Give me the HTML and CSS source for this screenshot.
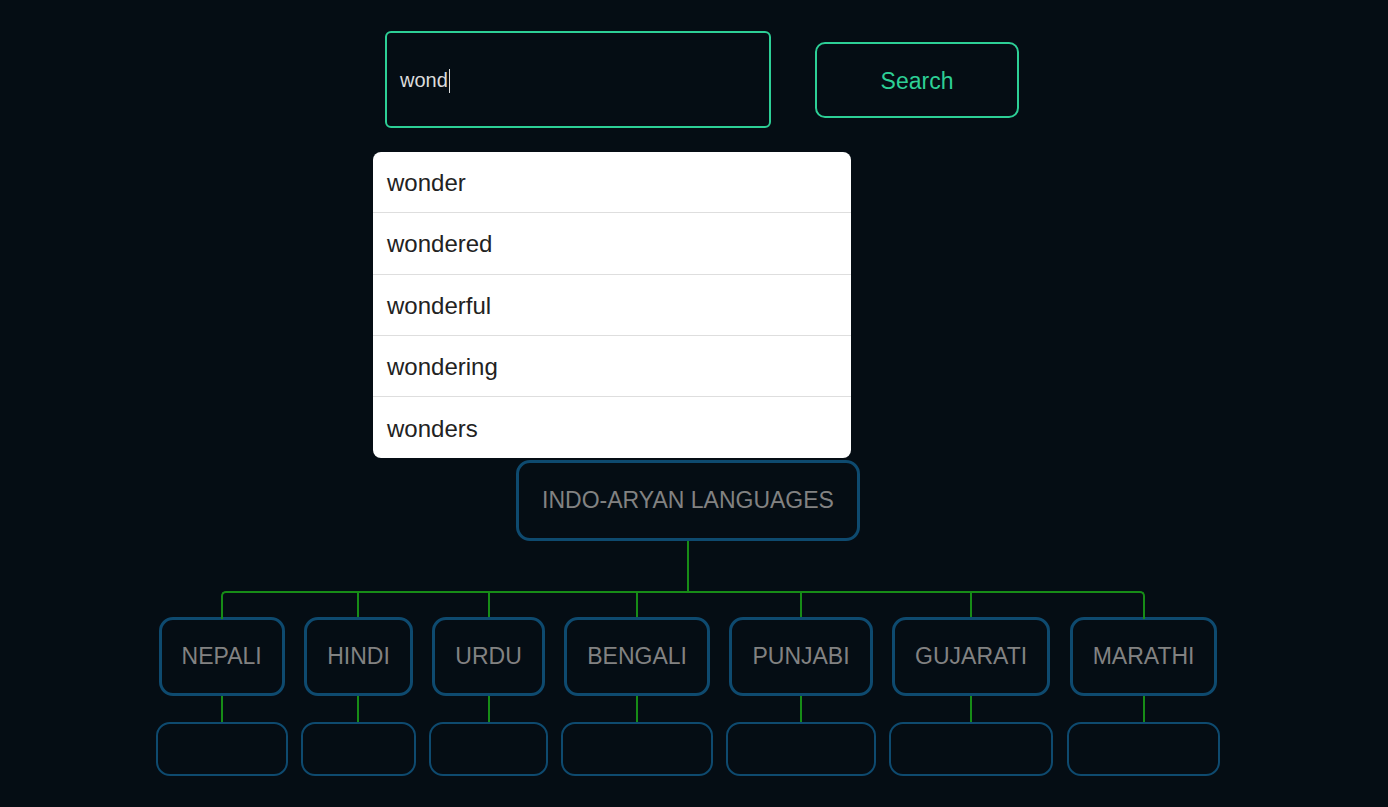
FILE: index.html
```html
<!DOCTYPE html>
<html lang="en">
<head>
<meta charset="utf-8">
<title>Language Tree Search</title>
<link rel="stylesheet" href="styles.css">
</head>
<body>
<header class="search-bar">
  <div class="search-field">
    <div class="search-input"><span class="typed">wond</span><span class="caret"></span></div>
    <ul class="suggestions">
      <li class="suggestion">wonder</li>
      <li class="suggestion">wondered</li>
      <li class="suggestion">wonderful</li>
      <li class="suggestion">wondering</li>
      <li class="suggestion">wonders</li>
    </ul>
  </div>
  <button class="search-button" type="button">Search</button>
</header>

<main class="tree">
  <div class="node node-root">INDO-ARYAN LANGUAGES</div>
  <div class="stem"></div>
  <div class="branches">
    <div class="branch branch-first">
      <div class="node node-child">NEPALI</div>
      <div class="drop"></div>
      <div class="node node-leaf"></div>
    </div>
    <div class="branch">
      <div class="node node-child">HINDI</div>
      <div class="drop"></div>
      <div class="node node-leaf"></div>
    </div>
    <div class="branch">
      <div class="node node-child">URDU</div>
      <div class="drop"></div>
      <div class="node node-leaf"></div>
    </div>
    <div class="branch">
      <div class="node node-child">BENGALI</div>
      <div class="drop"></div>
      <div class="node node-leaf"></div>
    </div>
    <div class="branch">
      <div class="node node-child">PUNJABI</div>
      <div class="drop"></div>
      <div class="node node-leaf"></div>
    </div>
    <div class="branch">
      <div class="node node-child">GUJARATI</div>
      <div class="drop"></div>
      <div class="node node-leaf"></div>
    </div>
    <div class="branch branch-last">
      <div class="node node-child">MARATHI</div>
      <div class="drop"></div>
      <div class="node node-leaf"></div>
    </div>
  </div>
</main>
</body>
</html>
```

FILE: styles.css
```css
* {
  box-sizing: border-box;
}

html, body {
  margin: 0;
  padding: 0;
  background: #050d14;
  height: 100%;
}

body {
  font-family: "Liberation Sans", Arial, Helvetica, sans-serif;
  overflow: hidden;
}

/* ---------- search bar ---------- */
.search-bar {
  display: flex;
  justify-content: center;
  align-items: center;
  gap: 44px;
  padding: 31px 0 0 16px;
}

.search-field {
  position: relative;
}

.search-input {
  width: 386px;
  height: 97px;
  border: 2px solid #2dcf96;
  border-radius: 6px;
  padding: 2px 0 0 13px;
  display: flex;
  align-items: center;
  font-size: 20px;
  color: #dcdcdc;
}

.caret {
  display: inline-block;
  width: 1px;
  height: 24px;
  background: #dcdcdc;
  margin-left: 1px;
}

.search-button {
  width: 204px;
  height: 76px;
  border: 2px solid #2dcf96;
  border-radius: 10px;
  background: transparent;
  color: #2dcf96;
  font-family: "Liberation Sans", Arial, sans-serif;
  font-size: 23px;
  padding: 3px 0 0;
}

.suggestions {
  position: absolute;
  top: 121px;
  left: -12px;
  width: 478px;
  margin: 0;
  padding: 0;
  list-style: none;
  background: #ffffff;
  border-radius: 8px;
  z-index: 10;
  overflow: hidden;
}

.suggestion {
  height: 61.3px;
  padding: 2px 14px 0;
  display: flex;
  align-items: center;
  font-size: 24px;
  color: #222222;
  border-bottom: 1px solid #dedede;
}

.suggestion:last-child {
  border-bottom: none;
}

/* ---------- tree ---------- */
.tree {
  display: flex;
  flex-direction: column;
  align-items: center;
  margin-top: 332px;
  padding-right: 12px;
}

.node {
  border: 3px solid #0e4a6f;
  border-radius: 14px;
  color: #828282;
  display: flex;
  align-items: center;
  justify-content: center;
  white-space: nowrap;
}

.node-root {
  height: 81px;
  padding: 0 23px;
  font-size: 23px;
}

.stem {
  width: 2px;
  height: 50px;
  background: #178c17;
}

.branches {
  display: flex;
  gap: 13.5px;
}

.branch {
  position: relative;
  display: flex;
  flex-direction: column;
  align-items: stretch;
  padding-top: 26px;
}

.branch::before {
  content: "";
  position: absolute;
  top: 0;
  left: -7px;
  right: -7px;
  border-top: 2px solid #178c17;
}

.branch::after {
  content: "";
  position: absolute;
  top: 0;
  left: calc(50% - 1px);
  width: 2px;
  height: 26px;
  background: #178c17;
}

.branch-first::before {
  left: calc(50% - 1px);
  height: 26px;
  border-left: 2px solid #178c17;
  border-top-left-radius: 5px;
}

.branch-last::before {
  right: calc(50% - 1px);
  height: 26px;
  border-right: 2px solid #178c17;
  border-top-right-radius: 5px;
}

.branch-first::after,
.branch-last::after {
  display: none;
}

.node-child {
  height: 79px;
  margin: 0 3px;
  padding: 0 20px;
  font-size: 23px;
}

.drop {
  align-self: center;
  width: 2px;
  height: 26px;
  background: #178c17;
}

.node-leaf {
  height: 54px;
  border-width: 2px;
}
```
